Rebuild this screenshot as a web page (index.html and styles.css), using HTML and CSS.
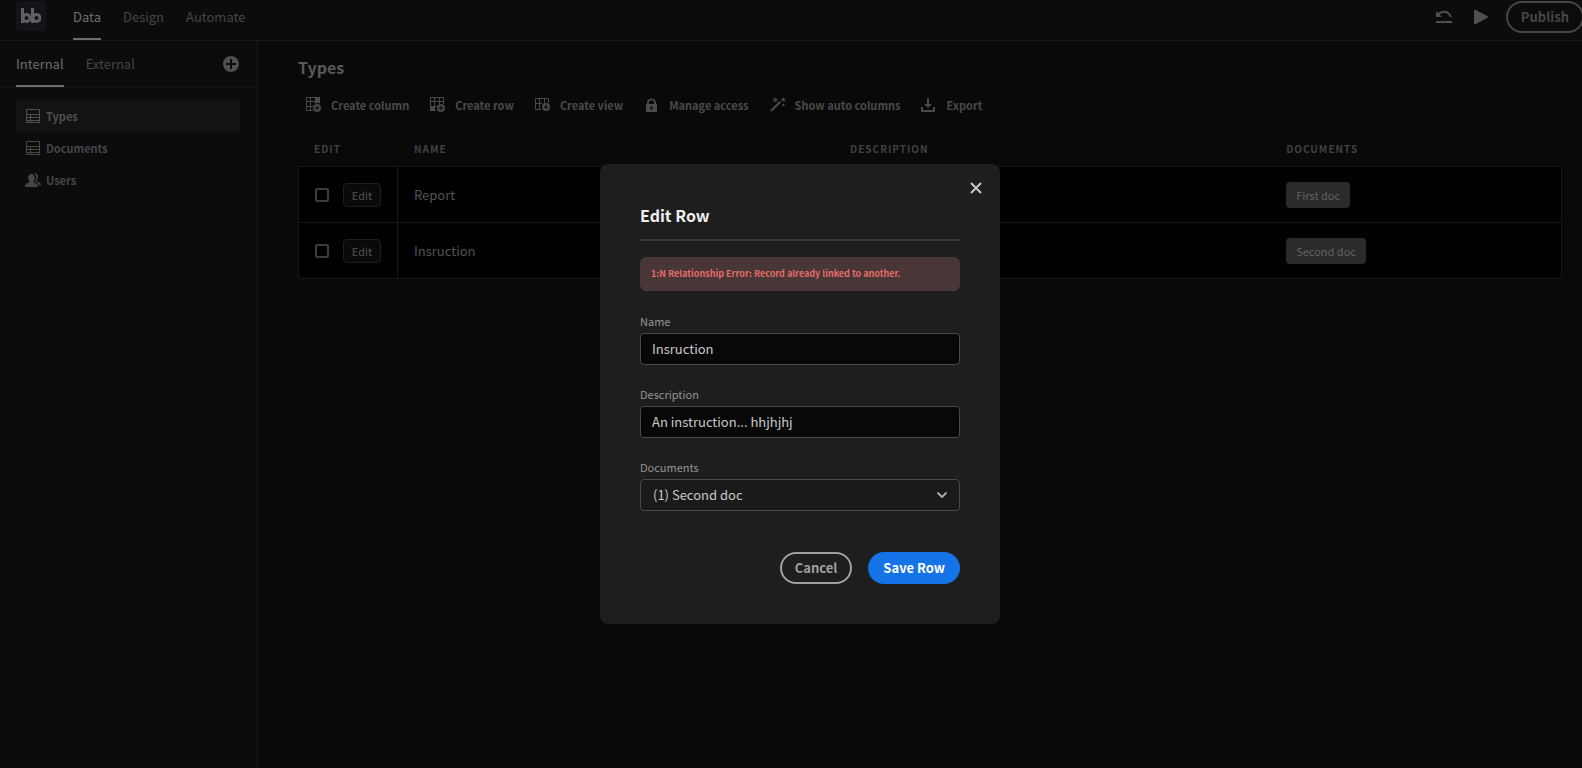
FILE: index.html
```html
<!DOCTYPE html>
<html lang="en">
  <head>
    <meta charset="UTF-8" />
    <meta name="viewport" content="width=device-width, initial-scale=1.0" />
    <title>Budibase</title>
    <link rel="stylesheet" href="styles.css">
  </head>
  <body>

    <!-- Top bar -->
    <header class="topnav">
      <a class="logo" href="#" aria-label="Home">
        <svg width="20" height="16" viewBox="0 0 20 16" fill="none" stroke="currentColor" stroke-width="3">
          <path d="M1.500 0v15M11.500 0v15" />
          <circle cx="5.500" cy="10" r="3.500" />
          <circle cx="15.500" cy="10" r="3.500" />
        </svg>
      </a>
      <nav class="tabs">
        <a class="tab selected" href="#">Data</a>
        <a class="tab" href="#">Design</a>
        <a class="tab" href="#">Automate</a>
      </nav>
      <div class="topnav-right">
        <button class="icon-button revert" aria-label="Revert">
          <svg width="16" height="14" viewBox="0 0 16 14">
            <path fill="currentColor" d="M0 11h16v2H0zM0 1l2 2.200C6-1 14 0 15.800 7h-2C12 2.500 7 1.500 3.800 4.800L6 7H0z" />
          </svg>
        </button>
        <button class="icon-button" aria-label="Preview">
          <svg width="14" height="14" viewBox="0 0 14 14"><path fill="currentColor" d="M0 0h2l12 6.500v1L2 14H0z" /></svg>
        </button>
        <button class="button outline publish">Publish</button>
      </div>
    </header>

    <div class="workspace">
      <!-- Data sources -->
      <aside class="sidebar">
        <div class="sidebar-head">
          <nav class="tabs">
            <a class="tab selected" href="#">Internal</a>
            <a class="tab" href="#">External</a>
          </nav>
          <button class="icon-button" aria-label="Add table">
            <svg width="16" height="16" viewBox="0 0 16 16">
              <path fill="currentColor" fill-rule="evenodd" d="M8 0a8 8 0 1 0 0 16A8 8 0 0 0 8 0zM7 3h2v4h4v2H9v4H7V9H3V7h4z" />
            </svg>
          </button>
        </div>
        <ul class="nav-list">
          <li>
            <a class="nav-item selected" href="#">
              <svg width="14" height="14" viewBox="0 0 14 14" fill="none" stroke="currentColor"><path d="M.5.5h13v13H.5zM0 5.500h14M0 8.500h14M0 11.500h14M4.500 5v9" /></svg>
              Types
            </a>
          </li>
          <li>
            <a class="nav-item" href="#">
              <svg width="14" height="14" viewBox="0 0 14 14" fill="none" stroke="currentColor"><path d="M.5.5h13v13H.5zM0 5.500h14M0 8.500h14M0 11.500h14M4.500 5v9" /></svg>
              Documents
            </a>
          </li>
          <li>
            <a class="nav-item users" href="#">
              <svg width="16" height="14" viewBox="0 0 16 14">
                <path fill="currentColor" d="M0 14c0-3 1.500-3.600 4.500-4.400V8.500C2.500 6 2.800 1 6.500 1S10.500 6 8.700 8.500v1.100c3 .8 4.300 1.400 4.300 4.400z" />
                <path fill="currentColor" d="M9 .4c4-1.200 5 4 2.700 7v1.200c2.600.7 4.300 1.400 4.300 4h-2c-.4-2-1.600-3-3.800-3.700V8C12 5.500 11.500 2 9 .4z" />
              </svg>
              Users
            </a>
          </li>
        </ul>
      </aside>

      <main class="content">
        <h1>Types</h1>

        <div class="toolbar">
          <button class="action">
            <svg width="16" height="16" viewBox="0 0 16 16">
              <path fill="none" stroke="currentColor" d="M14 .5H.5v13H7M4.500 0v14M9.500 0v7M0 4.500h14M0 9.500h7" />
              <path fill="currentColor" d="M9 0h5v6H9z" />
              <path fill="currentColor" fill-rule="evenodd" d="M11 7a4 4 0 1 0 0 8 4 4 0 0 0 0-8zm-.5 1.500h1v2h2v1h-2v2h-1v-2h-2v-1h2z" />
            </svg>
            Create column
          </button>
          <button class="action">
            <svg width="16" height="16" viewBox="0 0 16 16">
              <path fill="none" stroke="currentColor" d="M13.500 7V.5H.5v13H6M4.500 0v14M9.500 0v7M0 4.500h14M0 9.500h7" />
              <path fill="currentColor" d="M0 9h5v5H0z" />
              <path fill="currentColor" fill-rule="evenodd" d="M11 7a4 4 0 1 0 0 8 4 4 0 0 0 0-8zm-.5 1.500h1v2h2v1h-2v2h-1v-2h-2v-1h2z" />
            </svg>
            Create row
          </button>
          <button class="action">
            <svg width="16" height="16" viewBox="0 0 16 16">
              <path fill="none" stroke="currentColor" d="M13.500 6V1.500H.5v11H6M4.500 1v12M9.500 1v5M0 6.500h7" />
              <path fill="currentColor" fill-rule="evenodd" d="M11 6a4 4 0 1 0 0 8 4 4 0 0 0 0-8zm-.5 1.500h1v2h2v1h-2v2h-1v-2h-2v-1h2z" />
            </svg>
            Create view
          </button>
          <button class="action">
            <svg width="16" height="16" viewBox="0 0 16 16">
              <path fill="currentColor" fill-rule="evenodd" d="M2 7h1V5.500C3 0 12 0 12 5.500V7h1v8H2zM5 7h5V5.500c0-3-5-3-5 0zM6.500 9.500v3h2v-3z" />
            </svg>
            Manage access
          </button>
          <button class="action">
            <svg width="16" height="16" viewBox="0 0 16 16">
              <path fill="none" stroke="currentColor" stroke-width="2" d="M1 14l9.500-9.500" />
              <path fill="currentColor" d="M5 0l.8 1.700L8 2 6.500 3.500 6.800 5 5 4.200 3.200 5l.6-2L3 1.500h1.500zM13.500 0l.6 1.400L16 2l-1.500 1L15 4.500 13.500 4l-1.500.8.200-1.600L11 2l1.700-.4zM13.500 6.500L15 8l-1.500 1.500L12 8z" />
            </svg>
            Show auto columns
          </button>
          <button class="action">
            <svg width="16" height="16" viewBox="0 0 16 16">
              <path fill="currentColor" d="M0 10h2v3h10v-3h2v5H0zM6 1h2v6h3l-4 4-4-4h3z" />
            </svg>
            Export
          </button>
        </div>

        <table class="grid">
          <colgroup>
            <col class="col-edit">
            <col class="col-text">
            <col class="col-text">
            <col>
          </colgroup>
          <thead>
            <tr>
              <th>Edit</th>
              <th>Name</th>
              <th>Description</th>
              <th>Documents</th>
            </tr>
          </thead>
          <tbody>
            <tr>
              <td>
                <div class="row-actions">
                  <input type="checkbox" aria-label="Select Report">
                  <button class="small-button">Edit</button>
                </div>
              </td>
              <td>Report</td>
              <td></td>
              <td><span class="tag">First doc</span></td>
            </tr>
            <tr>
              <td>
                <div class="row-actions">
                  <input type="checkbox" aria-label="Select Insruction">
                  <button class="small-button">Edit</button>
                </div>
              </td>
              <td>Insruction</td>
              <td></td>
              <td><span class="tag">Second doc</span></td>
            </tr>
          </tbody>
        </table>
      </main>
    </div>

    <!-- Edit row dialog -->
    <div class="underlay">
      <form class="modal" role="dialog" aria-labelledby="modal-title">
        <button class="close" type="button" aria-label="Close">
          <svg width="12" height="12" viewBox="0 0 12 12" fill="none" stroke="currentColor" stroke-width="2"><path d="M1 1l10 10M11 1L1 11" /></svg>
        </button>
        <h2 id="modal-title">Edit Row</h2>
        <hr>
        <div class="error" role="alert">1:N Relationship Error: Record already linked to another.</div>
        <div class="field">
          <label for="name">Name</label>
          <input id="name" type="text" value="Insruction">
        </div>
        <div class="field">
          <label for="description">Description</label>
          <input id="description" type="text" value="An instruction... hhjhjhj">
        </div>
        <div class="field">
          <label for="documents">Documents</label>
          <div class="picker">
            <select id="documents">
              <option>(1) Second doc</option>
            </select>
            <svg width="10" height="6" viewBox="0 0 10 6" fill="none" stroke="currentColor" stroke-width="2"><path d="M.5.5L5 5 9.500.5" /></svg>
          </div>
        </div>
        <div class="buttons">
          <button class="button outline" type="button">Cancel</button>
          <button class="button cta" type="submit">Save Row</button>
        </div>
      </form>
    </div>

  </body>
</html>
```

FILE: styles.css
```css
:root {
  --bg: #090909;
  --panel: #0c0c0c;
  --line: #181818;
  --text: #6e6e6e;
  --muted: #464646;
  --modal: #1e1e1e;
  --radius: 4px;
}

* {
  box-sizing: border-box;
}

body {
  margin: 0;
  min-height: 100vh;
  display: flex;
  flex-direction: column;
  overflow: hidden;
  background: var(--bg);
  color: var(--muted);
  font-family: "Noto Sans CJK SC", "Open Sans", sans-serif;
  font-size: 13px;
  line-height: 20px;
}

a {
  color: inherit;
  text-decoration: none;
}

button,
input,
select {
  font: inherit;
  color: inherit;
}

button {
  cursor: pointer;
}

svg {
  display: block;
  flex: none;
}

/* Top bar */
.topnav {
  display: flex;
  height: 41px;
  padding-left: 16px;
  background: var(--panel);
  border-bottom: 1px solid var(--line);
}

.logo {
  display: flex;
  align-items: center;
  justify-content: center;
  width: 30px;
  height: 30px;
  margin: 1px 27px 0 0;
  border-radius: 3px;
  background: #12141a;
  color: #606060;
}

.tabs {
  display: flex;
  gap: 22px;
}

.tab {
  display: flex;
  align-items: center;
  border-bottom: 2px solid transparent;
}

.tab.selected {
  color: var(--text);
  border-bottom-color: var(--text);
}

.topnav .tab {
  padding-bottom: 4px;
}

.topnav-right {
  display: flex;
  align-items: center;
  gap: 18px;
  height: 34px;
  margin: 0 -2px 0 auto;
}

.icon-button {
  padding: 0;
  border: 0;
  background: none;
  color: #505050;
}

.revert {
  margin-right: 4px;
}

.button {
  height: 32px;
  padding: 0 13px;
  border: 2px solid transparent;
  border-radius: 16px;
  background: none;
  font-weight: 700;
  line-height: 20px;
}

.button.outline {
  border-color: currentColor;
}

/* Sidebar */
.workspace {
  display: flex;
  flex: 1;
}

.sidebar {
  width: 258px;
  background: var(--panel);
  border-right: 1px solid var(--line);
}

.sidebar-head {
  display: flex;
  justify-content: space-between;
  height: 47px;
  padding: 0 18px 0 16px;
  border-bottom: 1px solid #131313;
}

.sidebar-head .tab {
  padding-top: 2px;
}

.nav-list {
  margin: 0;
  padding: 12px 17px 0 16px;
  list-style: none;
}

.nav-item {
  display: flex;
  align-items: center;
  gap: 6px;
  height: 32px;
  padding: 0 10px;
  border-radius: var(--radius);
  font-size: 11px;
  font-weight: 700;
}

.nav-item.selected {
  background: #131313;
  color: #505050;
}

.nav-item.users {
  gap: 5px;
  padding-left: 9px;
}

/* Table view */
.content {
  flex: 1;
  padding: 14px 20px 0 40px;
}

h1 {
  margin: 0 0 2px;
  color: #585858;
  font-size: 16px;
  line-height: 24px;
}

.toolbar {
  display: flex;
  gap: 21px;
  padding: 8px 8px 10px;
}

.action {
  display: flex;
  align-items: center;
  gap: 9px;
  height: 32px;
  padding: 0;
  border: 0;
  background: none;
  color: #4a4a4a;
  font-size: 11px;
  font-weight: 700;
}

.grid {
  width: 100%;
  table-layout: fixed;
  border-collapse: separate;
  border-spacing: 0;
}

.col-edit {
  width: 100px;
}

.col-text {
  width: 34.5%;
}

th,
td {
  padding: 0 16px;
  text-align: left;
}

th {
  height: 36px;
  border-bottom: 1px solid var(--line);
  color: #424242;
  font-size: 10px;
  letter-spacing: 1px;
  text-transform: uppercase;
}

td {
  height: 56px;
  background: #010101;
  border-bottom: 1px solid var(--line);
  color: #525252;
}

td:first-child {
  padding-right: 0;
  border-left: 1px solid var(--line);
  border-right: 1px solid var(--line);
}

td:last-child {
  border-right: 1px solid var(--line);
}

tr:last-child td:first-child {
  border-bottom-left-radius: var(--radius);
}

tr:last-child td:last-child {
  border-bottom-right-radius: var(--radius);
}

.row-actions {
  display: flex;
  align-items: center;
  gap: 14px;
}

input[type="checkbox"] {
  appearance: none;
  width: 14px;
  height: 14px;
  margin: 0;
  border: 2px solid #3c3c3c;
  border-radius: 2px;
}

.small-button {
  width: 38px;
  height: 24px;
  padding: 0;
  border: 1px solid #1e1e1e;
  border-radius: var(--radius);
  background: #0a0a0a;
  font-size: 11px;
}

.tag {
  display: inline-block;
  padding: 0 10px;
  border-radius: var(--radius);
  background: #2b2b2b;
  color: #626262;
  font-size: 11px;
  line-height: 26px;
  vertical-align: middle;
}

/* Dialog */
.underlay {
  position: fixed;
  inset: 0;
  display: flex;
  align-items: center;
  justify-content: center;
  padding: 20px 0 0 18px;
}

.modal {
  position: relative;
  width: 400px;
  padding: 40px;
  border-radius: 8px;
  background: var(--modal);
  color: #c8c8c8;
}

.close {
  position: absolute;
  top: 18px;
  right: 18px;
  padding: 0;
  border: 0;
  background: none;
}

h2 {
  margin: 0;
  color: #efefef;
  font-size: 16px;
  line-height: 22px;
}

hr {
  height: 2px;
  margin: 13px 0 16px;
  border: 0;
  background: #3a3a3a;
}

.error {
  margin-bottom: 20px;
  padding: 7px 11px;
  border-radius: 6px;
  background: #483736;
  color: #e46c6a;
  font-size: 9px;
  font-weight: 700;
}

.field {
  margin-bottom: 19px;
}

.field label {
  display: block;
  margin-bottom: 2px;
  color: #949494;
  font-size: 11px;
}

.field input,
.field select {
  display: block;
  width: 100%;
  height: 32px;
  padding: 0 11px 2px;
  border: 1px solid #4a4a4a;
  border-radius: var(--radius);
  background: #080808;
}

.field select {
  appearance: none;
  padding: 0 12px;
  background: #1a1a1a;
}

.picker {
  position: relative;
}

.picker svg {
  position: absolute;
  top: 13px;
  right: 13px;
  color: #a8a8a8;
  pointer-events: none;
}

.buttons {
  display: flex;
  justify-content: flex-end;
  gap: 16px;
  padding-top: 22px;
}

.buttons .outline {
  color: #a0a0a0;
}

.button.cta {
  background: #1473e6;
  color: #ffffff;
}
```
